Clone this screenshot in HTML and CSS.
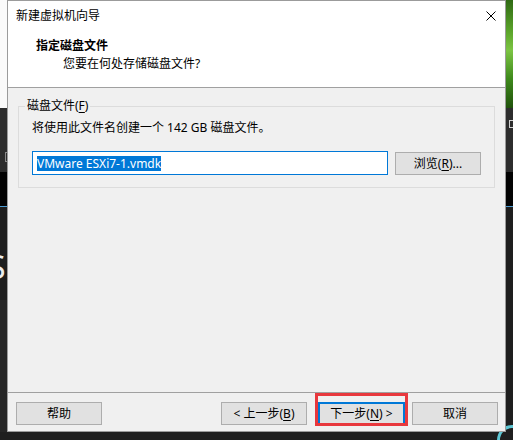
FILE: index.html
```html
<!DOCTYPE html>
<html>
<head>
	<meta charset="utf-8">
	<title>新建虚拟机向导</title>
	<link rel="stylesheet" href="styles.css">
</head>
<body>
	<div class="desktop">
		<!-- ventanas de fondo -->
		<div class="bg bg-white"></div>
		<div class="bg bg-green"></div>
		<div class="bg bg-bar"><span class="bg-ico ico-left"></span><span class="bg-ico ico-right"></span></div>
		<div class="bg bg-black"></div>
		<div class="bg bg-line"></div>
		<div class="bg bg-panel"></div>
		<div class="bg bg-taskbar"></div>
		<span class="bg-letter">S</span>
		<div class="bg-ring"></div>

		<div class="dialog">
			<div class="top">
				<div class="titlebar">
					<span class="caption">新建虚拟机向导</span>
					<svg class="close" width="10" height="10" viewBox="0 0 10 10">
						<path d="M0.5 0.5 L9.5 9.5 M9.5 0.5 L0.5 9.5" stroke="#000" stroke-width="1" fill="none"/>
					</svg>
				</div>
				<div class="header">
					<h1>指定磁盘文件</h1>
					<p>您要在何处存储磁盘文件?</p>
				</div>
			</div>

			<div class="content">
				<fieldset class="group">
					<legend>磁盘文件(<u>F</u>)</legend>
					<div class="group-body">
						<p class="info">将使用此文件名创建一个 142 GB 磁盘文件。</p>
						<div class="file-row">
							<div class="input"><span class="sel">VMware ESXi7-1.vmdk</span></div>
							<button class="btn browse">浏览(<u>R</u>)...</button>
						</div>
					</div>
				</fieldset>
			</div>

			<div class="footer">
				<button class="btn">帮助</button>
				<button class="btn back">&lt; 上一步(<u>B</u>)</button>
				<button class="btn next">下一步(<u>N</u>) &gt;</button>
				<button class="btn cancel">取消</button>
			</div>

			<div class="mark"></div>
		</div>
	</div>
</body>
</html>
```

FILE: styles.css
```css
*{
	box-sizing: border-box;
}
body{
	margin: 0;
	width: 513px;
	height: 440px;
	overflow: hidden;
	background-color: #1e1e1e;
	font-family: "Noto Sans", "Noto Sans CJK SC", sans-serif;
	font-size: 12px;
	color: #000;
}
.desktop{
	position: relative;
	width: 513px;
	height: 440px;
}

/* fondo */
.bg{
	position: absolute;
	left: 0;
	width: 513px;
}
.bg-white{
	top: 0;
	width: 8px;
	height: 108px;
	background-color: #fafafa;
}
.bg-green{
	top: 0;
	left: 505px;
	width: 8px;
	height: 112px;
	background: linear-gradient(#2f6a14, #5ea82c 30%, #7cc443 45%, #3f8a1c 70%, #1c4a09);
}
.bg-bar{
	top: 108px;
	height: 64px;
	background-color: #2d2d2d;
}
.bg-ico{
	position: absolute;
	border: 1px solid #8a8a8a;
}
.ico-left{
	left: 5px;
	top: 44px;
	width: 8px;
	height: 10px;
}
.ico-right{
	left: 509px;
	top: 12px;
	width: 8px;
	height: 8px;
	border-color: #d0d0d0;
}
.bg-black{
	top: 172px;
	height: 34px;
	background-color: #030303;
}
.bg-line{
	top: 206px;
	height: 1px;
	background-color: #4c9bd2;
}
.bg-panel{
	top: 300px;
	width: 8px;
	height: 132px;
	background-color: #262626;
}
.bg-taskbar{
	top: 432px;
	height: 8px;
	background-color: #1f1f1f;
}
.bg-letter{
	position: absolute;
	left: -12px;
	top: 251px;
	font-family: "Noto Sans", sans-serif;
	font-size: 32px;
	line-height: 32px;
	color: #ececec;
}
.bg-ring{
	position: absolute;
	left: 497px;
	top: 425px;
	width: 30px;
	height: 30px;
	border-radius: 50%;
	border: 3px solid #5ec6d4;
}

/* dialogo */
.dialog{
	position: absolute;
	left: 7px;
	top: 0;
	width: 499px;
	height: 432px;
	border: 1px solid #9b9b9b;
	background-color: #f0f0f0;
	display: flex;
	flex-direction: column;
}
.top{
	height: 87px;
	background-color: #fff;
	border-bottom: 1px solid #a0a0a0;
}
.titlebar{
	height: 29px;
	display: flex;
	align-items: center;
	padding-left: 8px;
	line-height: 16px;
}
.close{
	margin-left: auto;
	margin-right: 9px;
}
.header{
	padding-top: 8px;
}
.header h1{
	margin: 0;
	padding-left: 28px;
	font-size: 12px;
	font-weight: bold;
	line-height: 16px;
}
.header p{
	margin: 2px 0 0 55px;
	line-height: 16px;
}

.content{
	flex: 1;
}
.group{
	margin: 10px 10px 0 10px;
	padding: 6px 6px 12px 6px;
	border: 1px solid #dcdcdc;
	min-width: 0;
}
.group legend{
	padding: 0 2px;
	line-height: 16px;
}
.group-body{
	padding-left: 7px;
}
.info{
	margin: 0;
	line-height: 16px;
}
.file-row{
	display: flex;
	align-items: flex-start;
	margin-top: 15px;
}
.input{
	width: 356px;
	height: 24px;
	border: 1px solid #0078d7;
	background-color: #fff;
	padding-left: 4px;
	display: flex;
	align-items: center;
}
.sel{
	background-color: #0078d7;
	color: #fff;
	line-height: 15px;
}
u{
	text-underline-offset: 2px;
}
.btn{
	width: 86px;
	height: 23px;
	padding: 0;
	border: 1px solid #adadad;
	background-color: #e1e1e1;
	font-family: inherit;
	font-size: 12px;
	color: #000;
	line-height: 16px;
}
.browse{
	margin: 1px 0 0 7px;
}

.footer{
	height: 39px;
	border-top: 1px solid #a0a0a0;
	display: flex;
	align-items: flex-start;
	padding: 9px 0 0 8px;
}
.back{
	margin-left: auto;
}
.next{
	width: 87px;
	margin-left: 11px;
	border: 2px solid #0078d7;
}
.cancel{
	margin-left: 7px;
	margin-right: 7px;
}

/* recuadro rojo sobre el boton siguiente */
.mark{
	position: absolute;
	left: 307px;
	top: 392px;
	width: 93px;
	height: 33px;
	border: 3px solid #e8383d;
}
```
